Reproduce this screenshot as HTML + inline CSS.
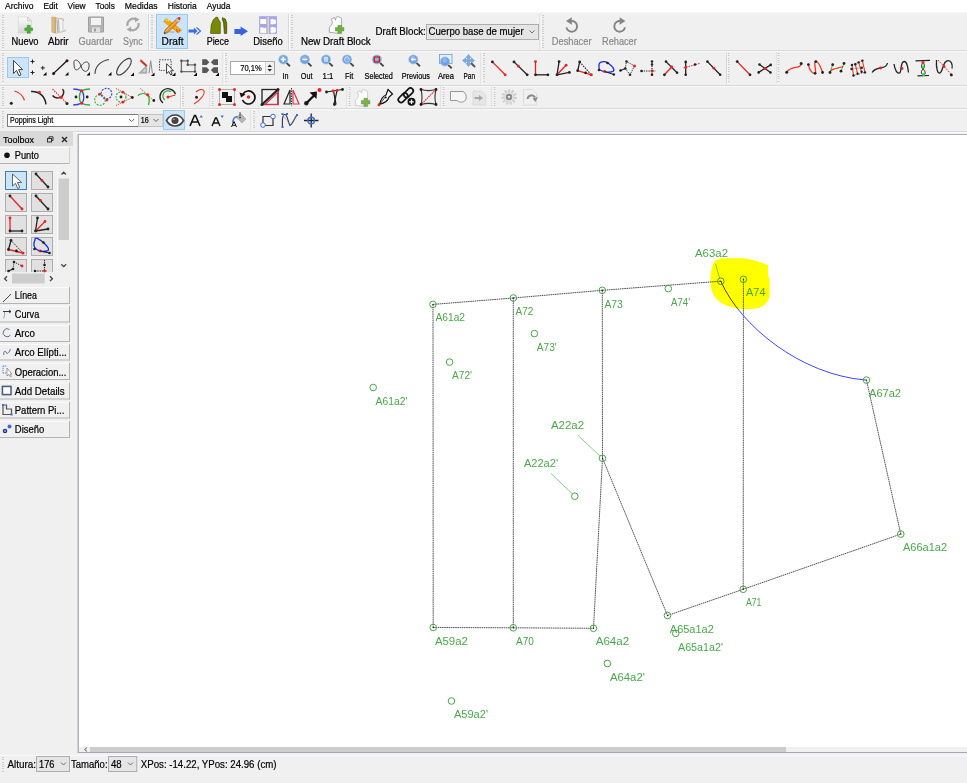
<!DOCTYPE html><html><head><meta charset="utf-8"><title>Seamly2D</title>
<style>html,body{margin:0;padding:0;background:#f0f0f0;overflow:hidden;}svg{display:block;}text{font-family:"Liberation Sans",sans-serif;}</style>
</head><body>
<svg width="967" height="783" viewBox="0 0 967 783">
<rect x="0" y="0" width="967" height="783" fill="#f0f0f0" />
<rect x="0" y="0" width="967" height="12" fill="#ffffff" />
<rect x="0" y="12" width="967" height="1" fill="#f6f6f6" />
<text x="5" y="9" font-size="9.5" fill="#000" stroke="#000" stroke-width="0.2" textLength="28.5" lengthAdjust="spacingAndGlyphs" >Archivo</text>
<text x="43.4" y="9" font-size="9.5" fill="#000" stroke="#000" stroke-width="0.2" textLength="14.3" lengthAdjust="spacingAndGlyphs" >Edit</text>
<text x="67.6" y="9" font-size="9.5" fill="#000" stroke="#000" stroke-width="0.2" textLength="18.0" lengthAdjust="spacingAndGlyphs" >View</text>
<text x="95.5" y="9" font-size="9.5" fill="#000" stroke="#000" stroke-width="0.2" textLength="19.3" lengthAdjust="spacingAndGlyphs" >Tools</text>
<text x="124.8" y="9" font-size="9.5" fill="#000" stroke="#000" stroke-width="0.2" textLength="32.9" lengthAdjust="spacingAndGlyphs" >Medidas</text>
<text x="167.8" y="9" font-size="9.5" fill="#000" stroke="#000" stroke-width="0.2" textLength="28.9" lengthAdjust="spacingAndGlyphs" >Historia</text>
<text x="206.8" y="9" font-size="9.5" fill="#000" stroke="#000" stroke-width="0.2" textLength="23.5" lengthAdjust="spacingAndGlyphs" >Ayuda</text>
<rect x="0" y="50" width="967" height="1" fill="#d9d9d9" />
<rect x="0" y="51" width="967" height="1" fill="#f9f9f9" />
<rect x="0" y="85" width="967" height="1" fill="#d9d9d9" />
<rect x="0" y="86" width="967" height="1" fill="#f9f9f9" />
<rect x="0" y="108" width="967" height="1" fill="#d9d9d9" />
<rect x="0" y="109" width="967" height="1" fill="#f9f9f9" />
<rect x="0" y="131" width="967" height="1" fill="#d9d9d9" />
<rect x="0" y="132" width="967" height="1" fill="#f9f9f9" />
<rect x="2.2" y="15" width="1.6" height="1" fill="#c4c4cc"/>
<rect x="2.2" y="17" width="1.6" height="1" fill="#c4c4cc"/>
<rect x="2.2" y="20" width="1.6" height="1" fill="#c4c4cc"/>
<rect x="2.2" y="22" width="1.6" height="1" fill="#c4c4cc"/>
<rect x="2.2" y="24" width="1.6" height="1" fill="#c4c4cc"/>
<rect x="2.2" y="27" width="1.6" height="1" fill="#c4c4cc"/>
<rect x="2.2" y="29" width="1.6" height="1" fill="#c4c4cc"/>
<rect x="2.2" y="31" width="1.6" height="1" fill="#c4c4cc"/>
<rect x="2.2" y="33" width="1.6" height="1" fill="#c4c4cc"/>
<rect x="2.2" y="36" width="1.6" height="1" fill="#c4c4cc"/>
<rect x="2.2" y="38" width="1.6" height="1" fill="#c4c4cc"/>
<rect x="2.2" y="40" width="1.6" height="1" fill="#c4c4cc"/>
<rect x="2.2" y="43" width="1.6" height="1" fill="#c4c4cc"/>
<rect x="2.2" y="45" width="1.6" height="1" fill="#c4c4cc"/>
<rect x="2.2" y="47" width="1.6" height="1" fill="#c4c4cc"/>
<defs><linearGradient id="docg" x1="0" y1="0" x2="0" y2="1"><stop offset="0" stop-color="#fcfcfc"/><stop offset="1" stop-color="#d4d4d4"/></linearGradient><linearGradient id="fldg" x1="0" y1="0" x2="1" y2="0"><stop offset="0" stop-color="#e6c48c"/><stop offset="1" stop-color="#d0a868"/></linearGradient></defs>
<path d="M18.3 17 H27.5 L31.5 21 V33 H18.3 Z" fill="url(#docg)" stroke="#d0d0d0" stroke-width="0.6"/><path d="M27.5 17 L27.5 21 L31.5 21 Z" fill="#e8e8e8" stroke="#b8b8b8" stroke-width="0.5"/><path d="M27.2 25.3 H30.2 V28 H32.6 V30.6 H30.2 V33.2 H27.2 V30.6 H24.8 V28 H27.2 Z" fill="#4cb030" stroke="#2f8a20" stroke-width="0.5"/>
<text x="11.6" y="44.5" font-size="10" fill="#000000" stroke="#000000" stroke-width="0.2" textLength="26.9" lengthAdjust="spacingAndGlyphs" >Nuevo</text>
<path d="M51.8 17 L56 17.5 L56 33.3 L51.8 32 Z" fill="url(#fldg)" stroke="#c09050" stroke-width="0.5"/><path d="M56 18 L63 19 L63 31 L56 33.3 Z" fill="#f2f2f2" stroke="#b0b0b0" stroke-width="0.5"/><path d="M57 19.5 L57.8 32.5 M58.5 19.5 L59 32" stroke="#9a9a9a" stroke-width="0.8"/><path d="M56 33.3 L63 31 L65.8 29 L65.8 31.5 L57 33.5 Z" fill="#c8c8c8"/><path d="M55 18.5 L63.5 19 L63.5 21" fill="none" stroke="#d8b478" stroke-width="0.8"/>
<text x="48" y="44.5" font-size="10" fill="#000000" stroke="#000000" stroke-width="0.2" textLength="20.6" lengthAdjust="spacingAndGlyphs" >Abrir</text>
<g transform="translate(88,16.5)"><path d="M0.5 0.5 H15.5 V15.5 H0.5 Z" fill="#b4b4b4" stroke="#a0a0a0" stroke-width="1"/><rect x="3" y="1.5" width="10" height="7" fill="#f2f2f2"/><rect x="4" y="11" width="8" height="4.5" fill="#e0e0e0"/><rect x="6" y="12" width="2" height="3" fill="#9a9a9a"/></g>
<text x="78.6" y="44.5" font-size="10" fill="#8a8a8a" stroke="#8a8a8a" stroke-width="0.2" textLength="34.1" lengthAdjust="spacingAndGlyphs" >Guardar</text>
<g transform="translate(133,24.5)" fill="none" stroke="#a8a8a8" stroke-width="2.2"><path d="M-5.5 1.5 A6 6 0 0 1 3.5 -4.8"/><path d="M5.5 -1.5 A6 6 0 0 1 -3.5 4.8"/></g><path d="M135 17 L139.5 19.5 L135 22.5 Z" fill="#a8a8a8"/><path d="M131 32 L126.5 29.5 L131 26.5 Z" fill="#a8a8a8"/>
<text x="123" y="44.5" font-size="10" fill="#8a8a8a" stroke="#8a8a8a" stroke-width="0.2" textLength="19.7" lengthAdjust="spacingAndGlyphs" >Sync</text>
<rect x="148" y="14" width="1" height="36" fill="#d8d8d8" />
<rect x="149" y="14" width="1" height="36" fill="#fbfbfb" />
<rect x="151.2" y="15" width="1.6" height="1" fill="#c4c4cc"/>
<rect x="151.2" y="17" width="1.6" height="1" fill="#c4c4cc"/>
<rect x="151.2" y="20" width="1.6" height="1" fill="#c4c4cc"/>
<rect x="151.2" y="22" width="1.6" height="1" fill="#c4c4cc"/>
<rect x="151.2" y="24" width="1.6" height="1" fill="#c4c4cc"/>
<rect x="151.2" y="27" width="1.6" height="1" fill="#c4c4cc"/>
<rect x="151.2" y="29" width="1.6" height="1" fill="#c4c4cc"/>
<rect x="151.2" y="31" width="1.6" height="1" fill="#c4c4cc"/>
<rect x="151.2" y="33" width="1.6" height="1" fill="#c4c4cc"/>
<rect x="151.2" y="36" width="1.6" height="1" fill="#c4c4cc"/>
<rect x="151.2" y="38" width="1.6" height="1" fill="#c4c4cc"/>
<rect x="151.2" y="40" width="1.6" height="1" fill="#c4c4cc"/>
<rect x="151.2" y="43" width="1.6" height="1" fill="#c4c4cc"/>
<rect x="151.2" y="45" width="1.6" height="1" fill="#c4c4cc"/>
<rect x="151.2" y="47" width="1.6" height="1" fill="#c4c4cc"/>
<rect x="156.5" y="14.5" width="31" height="34" fill="#cce4f7" stroke="#99c9ef" stroke-width="1" />
<path d="M163.5 21.5 L166.5 18.5 L181.5 30 L178.5 33 Z" fill="#f8a800" stroke="#d88000" stroke-width="0.5"/><circle cx="166.7" cy="20.3" r="0.7" fill="#ffff40"/><circle cx="168.5" cy="20.6" r="0.7" fill="#ffff40"/><circle cx="176.6" cy="29.9" r="0.7" fill="#e02020"/><circle cx="177.3" cy="31.7" r="0.7" fill="#e02020"/><circle cx="179.5" cy="30.6" r="0.7" fill="#e02020"/><ellipse cx="172" cy="32" rx="3" ry="1" fill="#98a8c0" opacity="0.6"/><path d="M164 33.8 L165 30 L177 18.5 L179.5 21 L167.8 32.8 Z" fill="#e89020" stroke="#8a5010" stroke-width="0.5"/><path d="M165.5 31.5 L177.8 19.8" stroke="#ffd070" stroke-width="0.8"/><path d="M164 33.8 L164.6 31.8 L166 33.2 Z" fill="#333"/><path d="M176.5 19 L178.3 17.2 C 179.5 16.3, 181.2 17.6, 180.5 19 L178.8 20.8 Z" fill="#d83030"/><path d="M176 19.5 L177.2 18.3 L179.9 21 L178.7 22.2 Z" fill="#c8c8c8"/>
<text x="161.6" y="44.5" font-size="10" fill="#000000" stroke="#000000" stroke-width="0.2" textLength="21.9" lengthAdjust="spacingAndGlyphs" >Draft</text>
<path d="M188.5 29.5 H194 V27.5 L197.5 31 L194 34.5 V32.5 H188.5 Z" fill="#3a6fe0"/><path d="M196.5 27.5 L200.5 31 L196.5 34.5" fill="none" stroke="#3a6fe0" stroke-width="1.2"/>
<path d="M210.6 33.4 L211.2 25 L213.3 19.8 L215.8 17.3 L217.8 17.3 L218.2 19 L220.3 22.3 L220.3 33.4 Z" fill="#7a8a00" stroke="#4a5200" stroke-width="0.7"/><path d="M222.4 17.7 L225.3 19 L226.7 23.1 L226.7 33.4 L224.4 33.4 L223.6 23.1 L222.4 19.5 Z" fill="#6a7a00" stroke="#3a4200" stroke-width="0.7"/>
<text x="206.7" y="44.5" font-size="10" fill="#000000" stroke="#000000" stroke-width="0.2" textLength="22.3" lengthAdjust="spacingAndGlyphs" >Piece</text>
<path d="M234.4 28.9 H240.6 V26.4 L248 31.2 L240.6 35.9 V33.9 H234.4 Z" fill="#3a62e0"/>
<g><rect x="259.2" y="16.2" width="17.8" height="17.6" fill="#a6a2f8"/><rect x="260" y="18.8" width="6.6" height="5.4" fill="#fbfbfb" stroke="#9a9a9a" stroke-width="0.4"/><path d="M260 27 H263 L264 28 L266.6 27 V33.4 H260 Z" fill="#fbfbfb" stroke="#9a9a9a" stroke-width="0.4"/><path d="M269.8 19.5 L272 18.8 L276.2 19.5 V24 L272 24.8 L269.8 24 L270.5 21.7 Z" fill="#fbfbfb" stroke="#9a9a9a" stroke-width="0.4"/><path d="M269.8 28 L272 26.5 L276.2 27.5 V32.5 L272 33.4 L269.8 32.5 L270.5 30 Z" fill="#fbfbfb" stroke="#9a9a9a" stroke-width="0.4"/><rect x="267.2" y="16.2" width="1.9" height="17.6" fill="#d8d8d8" stroke="#a8a8a8" stroke-width="0.3"/></g>
<text x="253.3" y="44.5" font-size="10" fill="#000000" stroke="#000000" stroke-width="0.2" textLength="29.4" lengthAdjust="spacingAndGlyphs" >Diseño</text>
<rect x="288" y="14" width="1" height="36" fill="#d8d8d8" />
<rect x="289" y="14" width="1" height="36" fill="#fbfbfb" />
<rect x="291.2" y="15" width="1.6" height="1" fill="#c4c4cc"/>
<rect x="291.2" y="17" width="1.6" height="1" fill="#c4c4cc"/>
<rect x="291.2" y="20" width="1.6" height="1" fill="#c4c4cc"/>
<rect x="291.2" y="22" width="1.6" height="1" fill="#c4c4cc"/>
<rect x="291.2" y="24" width="1.6" height="1" fill="#c4c4cc"/>
<rect x="291.2" y="27" width="1.6" height="1" fill="#c4c4cc"/>
<rect x="291.2" y="29" width="1.6" height="1" fill="#c4c4cc"/>
<rect x="291.2" y="31" width="1.6" height="1" fill="#c4c4cc"/>
<rect x="291.2" y="33" width="1.6" height="1" fill="#c4c4cc"/>
<rect x="291.2" y="36" width="1.6" height="1" fill="#c4c4cc"/>
<rect x="291.2" y="38" width="1.6" height="1" fill="#c4c4cc"/>
<rect x="291.2" y="40" width="1.6" height="1" fill="#c4c4cc"/>
<rect x="291.2" y="43" width="1.6" height="1" fill="#c4c4cc"/>
<rect x="291.2" y="45" width="1.6" height="1" fill="#c4c4cc"/>
<rect x="291.2" y="47" width="1.6" height="1" fill="#c4c4cc"/>
<path d="M331.2 19.3 L334.3 17.4 L335.5 20.2 L336.1 17.4 L337.7 16.5 L341.6 18.3 L341.6 26 L338 33.3 L329.3 32.3 L329.3 27.4 L331.8 24.6 L332.4 21.8 Z" fill="#ffffff" stroke="#8a8a8a" stroke-width="0.7" stroke-linejoin="round"/><path d="M337.9 25.3 H341.6 V27.4 H343.9 V31 H341.6 V33.6 H337.9 V31 H335.3 V27.4 H337.9 Z" fill="#6cb040" stroke="#4a8a2a" stroke-width="0.4"/>
<text x="300.9" y="44.5" font-size="10" fill="#000000" stroke="#000000" stroke-width="0.2" textLength="69.8" lengthAdjust="spacingAndGlyphs" >New Draft Block</text>
<text x="375.6" y="35.2" font-size="10" fill="#000000" stroke="#000000" stroke-width="0.2" textLength="50.2" lengthAdjust="spacingAndGlyphs" >Draft Block:</text>
<rect x="426.5" y="24.5" width="112" height="15" fill="#e5e5e5" stroke="#adadad" stroke-width="1" />
<text x="428.6" y="35.2" font-size="10" fill="#000000" stroke="#000000" stroke-width="0.2" textLength="95" lengthAdjust="spacingAndGlyphs" >Cuerpo base de mujer</text>
<path d="M529.5 30.5 L532 33 L534.5 30.5" fill="none" stroke="#555" stroke-width="0.8"/>
<rect x="539.5" y="14" width="1" height="36" fill="#d8d8d8" />
<rect x="540.5" y="14" width="1" height="36" fill="#fbfbfb" />
<rect x="542.2" y="15" width="1.6" height="1" fill="#c4c4cc"/>
<rect x="542.2" y="17" width="1.6" height="1" fill="#c4c4cc"/>
<rect x="542.2" y="20" width="1.6" height="1" fill="#c4c4cc"/>
<rect x="542.2" y="22" width="1.6" height="1" fill="#c4c4cc"/>
<rect x="542.2" y="24" width="1.6" height="1" fill="#c4c4cc"/>
<rect x="542.2" y="27" width="1.6" height="1" fill="#c4c4cc"/>
<rect x="542.2" y="29" width="1.6" height="1" fill="#c4c4cc"/>
<rect x="542.2" y="31" width="1.6" height="1" fill="#c4c4cc"/>
<rect x="542.2" y="33" width="1.6" height="1" fill="#c4c4cc"/>
<rect x="542.2" y="36" width="1.6" height="1" fill="#c4c4cc"/>
<rect x="542.2" y="38" width="1.6" height="1" fill="#c4c4cc"/>
<rect x="542.2" y="40" width="1.6" height="1" fill="#c4c4cc"/>
<rect x="542.2" y="43" width="1.6" height="1" fill="#c4c4cc"/>
<rect x="542.2" y="45" width="1.6" height="1" fill="#c4c4cc"/>
<rect x="542.2" y="47" width="1.6" height="1" fill="#c4c4cc"/>
<g fill="none" stroke="#858585" stroke-width="1.9"><path d="M571 21 A5.4 5.4 0 1 1 566.4 27.4"/><path d="M620.4 21 A5.4 5.4 0 1 0 625 27.4"/></g><path d="M566 21 L571.8 17.2 L571.8 24.8 Z" fill="#858585"/><path d="M625.4 21 L619.6 17.2 L619.6 24.8 Z" fill="#858585"/>
<text x="551.8" y="44.5" font-size="10" fill="#8a8a8a" stroke="#8a8a8a" stroke-width="0.2" textLength="39.7" lengthAdjust="spacingAndGlyphs" >Deshacer</text>
<text x="602" y="44.5" font-size="10" fill="#8a8a8a" stroke="#8a8a8a" stroke-width="0.2" textLength="34.8" lengthAdjust="spacingAndGlyphs" >Rehacer</text>
<rect x="2.2" y="53" width="1.6" height="1" fill="#c4c4cc"/>
<rect x="2.2" y="55" width="1.6" height="1" fill="#c4c4cc"/>
<rect x="2.2" y="58" width="1.6" height="1" fill="#c4c4cc"/>
<rect x="2.2" y="60" width="1.6" height="1" fill="#c4c4cc"/>
<rect x="2.2" y="62" width="1.6" height="1" fill="#c4c4cc"/>
<rect x="2.2" y="64" width="1.6" height="1" fill="#c4c4cc"/>
<rect x="2.2" y="67" width="1.6" height="1" fill="#c4c4cc"/>
<rect x="2.2" y="69" width="1.6" height="1" fill="#c4c4cc"/>
<rect x="2.2" y="71" width="1.6" height="1" fill="#c4c4cc"/>
<rect x="2.2" y="74" width="1.6" height="1" fill="#c4c4cc"/>
<rect x="2.2" y="76" width="1.6" height="1" fill="#c4c4cc"/>
<rect x="2.2" y="78" width="1.6" height="1" fill="#c4c4cc"/>
<rect x="2.2" y="81" width="1.6" height="1" fill="#c4c4cc"/>
<rect x="7.5" y="57.5" width="21" height="20" fill="#cce4f7" stroke="#99c9ef" stroke-width="1" />
<path d="M13.5 60.5 L13.5 73.5 L16.5 70.5 L19 75.8 L21 74.8 L18.6 69.6 L22.6 69.6 Z" fill="#fff" stroke="#333" stroke-width="0.9" stroke-linejoin="round"/>
<g stroke="#222" stroke-width="1"><path d="M30.5 61.5 H34.5 M32.5 59.5 V63.5"/><path d="M40.8 67.9 H44.8 M42.8 65.9 V69.9"/><path d="M30.5 72.5 H34.5 M32.5 70.5 V74.5"/></g>
<path d="M46.5 75.5 L43.0 75.5 L46.5 72.0 Z" fill="#000"/>
<line x1="53.6" y1="73.4" x2="67" y2="60.7" stroke="#111" stroke-width="1.3"/>
<circle cx="53.6" cy="73.4" r="1.5" fill="#3a1010"/>
<circle cx="67" cy="60.7" r="1.5" fill="#3a1010"/>
<path d="M68.5 75.5 L65.0 75.5 L68.5 72.0 Z" fill="#000"/>
<path d="M74 64 C 73 58, 79 59, 81 66 C 83 73, 88 73, 89 67 C 90 61, 85 60, 81 66 C 78 71, 74 72, 74 64 Z" fill="none" stroke="#444" stroke-width="1"/>
<path d="M90 75.5 L86.5 75.5 L90 72.0 Z" fill="#000"/>
<path d="M95 74 C 95 67, 100 61, 109 59.5" fill="none" stroke="#444" stroke-width="1.1"/>
<path d="M111.5 75.5 L108.0 75.5 L111.5 72.0 Z" fill="#000"/>
<ellipse cx="124" cy="66.7" rx="10.2" ry="4.3" transform="rotate(-50 124 66.7)" fill="none" stroke="#3a3a3a" stroke-width="1.1"/>
<path d="M134 76 L130.5 76 L134 72.5 Z" fill="#000"/>
<path d="M138.7 73.3 L146.7 73.3 L146.7 65.4 Z" fill="#b0b0b0" stroke="#9a9a9a" stroke-width="0.6"/><path d="M142.5 71.5 L145.3 71.5 L145.3 68.7 Z" fill="#e0e0e0"/><path d="M140.4 60.3 L146.7 66" stroke="#d03030" stroke-width="2.2"/><path d="M140 60 L141.2 59" stroke="#f0c060" stroke-width="1"/><path d="M150.7 60.8 L149 73.3 M150.7 60.8 L152.4 73.3" stroke="#8a8a8a" stroke-width="1" fill="none"/>
<path d="M154.5 76 L151.0 76 L154.5 72.5 Z" fill="#000"/>
<rect x="159.5" y="59.8" width="11.6" height="10.6" fill="none" stroke="#222" stroke-width="0.9" stroke-dasharray="1.3,1.3"/><path d="M166.6 63.7 L166.6 73.6 L168.9 71.5 L170.6 75 L172.2 74.2 L170.6 70.9 L173.4 70.7 Z" fill="#fff" stroke="#222" stroke-width="0.9" stroke-linejoin="round"/>
<path d="M175.5 76 L172.0 76 L175.5 72.5 Z" fill="#000"/>
<path d="M181.4 60.8 L187.7 60.8 L187.7 64.8 L195 64.8 L195 71.6 L181.4 71.6 Z" fill="none" stroke="#707070" stroke-width="1.3"/>
<circle cx="181.4" cy="60.8" r="1.2" fill="#505050"/>
<circle cx="187.7" cy="60.8" r="1.2" fill="#505050"/>
<circle cx="187.7" cy="64.8" r="1.2" fill="#505050"/>
<circle cx="195" cy="64.8" r="1.2" fill="#505050"/>
<circle cx="195" cy="71.6" r="1.2" fill="#505050"/>
<circle cx="181.4" cy="71.6" r="1.2" fill="#505050"/>
<path d="M197 76 L193.5 76 L197 72.5 Z" fill="#000"/>
<g fill="#575757"><path d="M202.2 59.3 H206.6 L209.3 62.2 L206.6 65.1 H202.2 Z"/><path d="M218 59.3 H213.6 L210.9 62.2 L213.6 65.1 H218 Z"/><path d="M202.2 67.2 H206.6 L209.3 70.1 L206.6 73 H202.2 Z"/><path d="M218 67.2 H213.6 L210.9 70.1 L213.6 73 H218 Z"/></g>
<path d="M219 76 L215.5 76 L219 72.5 Z" fill="#000"/>
<rect x="222.5" y="52" width="1" height="32" fill="#d8d8d8" />
<rect x="223.5" y="52" width="1" height="32" fill="#fbfbfb" />
<rect x="225.2" y="53" width="1.6" height="1" fill="#c4c4cc"/>
<rect x="225.2" y="55" width="1.6" height="1" fill="#c4c4cc"/>
<rect x="225.2" y="58" width="1.6" height="1" fill="#c4c4cc"/>
<rect x="225.2" y="60" width="1.6" height="1" fill="#c4c4cc"/>
<rect x="225.2" y="62" width="1.6" height="1" fill="#c4c4cc"/>
<rect x="225.2" y="64" width="1.6" height="1" fill="#c4c4cc"/>
<rect x="225.2" y="67" width="1.6" height="1" fill="#c4c4cc"/>
<rect x="225.2" y="69" width="1.6" height="1" fill="#c4c4cc"/>
<rect x="225.2" y="71" width="1.6" height="1" fill="#c4c4cc"/>
<rect x="225.2" y="74" width="1.6" height="1" fill="#c4c4cc"/>
<rect x="225.2" y="76" width="1.6" height="1" fill="#c4c4cc"/>
<rect x="225.2" y="78" width="1.6" height="1" fill="#c4c4cc"/>
<rect x="225.2" y="81" width="1.6" height="1" fill="#c4c4cc"/>
<rect x="230.5" y="61.5" width="44" height="13" fill="#ffffff" stroke="#a8a8a8" stroke-width="1" />
<rect x="265.5" y="62" width="8.5" height="12" fill="#f0f0f0" />
<rect x="265" y="62" width="1" height="12" fill="#d0d0d0" />
<path d="M267.5 67 L269.7 64.5 L271.9 67 Z M267.5 69 L269.7 71.5 L271.9 69 Z" fill="#222"/>
<text x="240.2" y="71.3" font-size="9" fill="#000000" stroke="#000000" stroke-width="0.2" textLength="21.5" lengthAdjust="spacingAndGlyphs" >70,1%</text>
<g transform="translate(278.8,54.5)"><line x1="7.6" y1="8.4" x2="11.2" y2="11.8" stroke="#4a4a4a" stroke-width="1.9"/><circle cx="4.5" cy="5" r="4.6" fill="#6aa2e8" stroke="#b8c0c8" stroke-width="0.7"/><circle cx="4.2" cy="3.8" r="2.4" fill="#9cc4f0" opacity="0.7"/><g transform="translate(-1,-0.5)"><path d="M3 5.5 H8 M5.5 3 V8" stroke="#fff" stroke-width="1.4"/></g></g>
<text x="282.6" y="79.2" font-size="8.5" fill="#000000" stroke="#000000" stroke-width="0.2" textLength="6.0" lengthAdjust="spacingAndGlyphs" >In</text>
<g transform="translate(300.3,54.5)"><line x1="7.6" y1="8.4" x2="11.2" y2="11.8" stroke="#4a4a4a" stroke-width="1.9"/><circle cx="4.5" cy="5" r="4.6" fill="#6aa2e8" stroke="#b8c0c8" stroke-width="0.7"/><circle cx="4.2" cy="3.8" r="2.4" fill="#9cc4f0" opacity="0.7"/><g transform="translate(-1,-0.5)"><path d="M3 5.5 H8" stroke="#fff" stroke-width="1.4"/></g></g>
<text x="300.8" y="79.2" font-size="8.5" fill="#000000" stroke="#000000" stroke-width="0.2" textLength="11.6" lengthAdjust="spacingAndGlyphs" >Out</text>
<g transform="translate(321.5,54.5)"><line x1="7.6" y1="8.4" x2="11.2" y2="11.8" stroke="#4a4a4a" stroke-width="1.9"/><circle cx="4.5" cy="5" r="4.6" fill="#6aa2e8" stroke="#b8c0c8" stroke-width="0.7"/><circle cx="4.2" cy="3.8" r="2.4" fill="#9cc4f0" opacity="0.7"/><g transform="translate(-1,-0.5)"><path d="M4.5 3 V8 M6.5 3 V8" stroke="#fff" stroke-width="1"/></g></g>
<text x="322.6" y="79.2" font-size="8.5" fill="#000000" stroke="#000000" stroke-width="0.2" textLength="10.8" lengthAdjust="spacingAndGlyphs" >1:1</text>
<g transform="translate(342.5,54.5)"><line x1="7.6" y1="8.4" x2="11.2" y2="11.8" stroke="#4a4a4a" stroke-width="1.9"/><circle cx="4.5" cy="5" r="4.6" fill="#6aa2e8" stroke="#b8c0c8" stroke-width="0.7"/><circle cx="4.2" cy="3.8" r="2.4" fill="#9cc4f0" opacity="0.7"/><g transform="translate(-1,-0.5)"><circle cx="5.5" cy="5.5" r="2.5" fill="none" stroke="#fff" stroke-width="0.9" stroke-dasharray="1.2,1"/></g></g>
<text x="345" y="79.2" font-size="8.5" fill="#000000" stroke="#000000" stroke-width="0.2" textLength="8.3" lengthAdjust="spacingAndGlyphs" >Fit</text>
<g transform="translate(372.4,54.5)"><line x1="7.6" y1="8.4" x2="11.2" y2="11.8" stroke="#4a4a4a" stroke-width="1.9"/><circle cx="4.5" cy="5" r="4.6" fill="#6aa2e8" stroke="#b8c0c8" stroke-width="0.7"/><circle cx="4.2" cy="3.8" r="2.4" fill="#9cc4f0" opacity="0.7"/><g transform="translate(-1,-0.5)"><rect x="3" y="3" width="5" height="5" fill="none" stroke="#d02020" stroke-width="1.3"/></g></g>
<text x="364.6" y="79.2" font-size="8.5" fill="#000000" stroke="#000000" stroke-width="0.2" textLength="28.2" lengthAdjust="spacingAndGlyphs" >Selected</text>
<g transform="translate(408.8,54.5)"><line x1="7.6" y1="8.4" x2="11.2" y2="11.8" stroke="#4a4a4a" stroke-width="1.9"/><circle cx="4.5" cy="5" r="4.6" fill="#6aa2e8" stroke="#b8c0c8" stroke-width="0.7"/><circle cx="4.2" cy="3.8" r="2.4" fill="#9cc4f0" opacity="0.7"/><g transform="translate(-1,-0.5)"><path d="M3 5.5 L5 3.5 V4.7 H8 V6.3 H5 V7.5 Z" fill="#fff"/></g></g>
<text x="401.7" y="79.2" font-size="8.5" fill="#000000" stroke="#000000" stroke-width="0.2" textLength="28.2" lengthAdjust="spacingAndGlyphs" >Previous</text>
<rect x="439.5" y="54.5" width="12.5" height="9" fill="#e8f0fa" stroke="#6a9ad8" stroke-width="0.8"/>
<g transform="translate(440.5,56.5)"><line x1="7.6" y1="8.4" x2="11.2" y2="11.8" stroke="#4a4a4a" stroke-width="1.9"/><circle cx="4.5" cy="5" r="4.6" fill="#6aa2e8" stroke="#b8c0c8" stroke-width="0.7"/><circle cx="4.2" cy="3.8" r="2.4" fill="#9cc4f0" opacity="0.7"/><g transform="translate(-1,-0.5)"></g></g>
<text x="438" y="79.2" font-size="8.5" fill="#000000" stroke="#000000" stroke-width="0.2" textLength="16" lengthAdjust="spacingAndGlyphs" >Area</text>
<g transform="translate(462.5,54.5)"><line x1="8.5" y1="8.5" x2="12.5" y2="12.5" stroke="#555" stroke-width="2"/><path d="M6 0 L8.5 3 L7 3 L7 5 L9 5 L9 3.5 L12 6 L9 8.5 L9 7 L7 7 L7 9 L8.5 9 L6 12 L3.5 9 L5 9 L5 7 L3 7 L3 8.5 L0 6 L3 3.5 L3 5 L5 5 L5 3 L3.5 3 Z" fill="#7aaee8" stroke="#5a8ac8" stroke-width="0.5"/></g>
<text x="463.5" y="79.2" font-size="8.5" fill="#000000" stroke="#000000" stroke-width="0.2" textLength="11.5" lengthAdjust="spacingAndGlyphs" >Pan</text>
<rect x="480.5" y="52" width="1" height="32" fill="#d8d8d8" />
<rect x="481.5" y="52" width="1" height="32" fill="#fbfbfb" />
<rect x="483.2" y="53" width="1.6" height="1" fill="#c4c4cc"/>
<rect x="483.2" y="55" width="1.6" height="1" fill="#c4c4cc"/>
<rect x="483.2" y="58" width="1.6" height="1" fill="#c4c4cc"/>
<rect x="483.2" y="60" width="1.6" height="1" fill="#c4c4cc"/>
<rect x="483.2" y="62" width="1.6" height="1" fill="#c4c4cc"/>
<rect x="483.2" y="64" width="1.6" height="1" fill="#c4c4cc"/>
<rect x="483.2" y="67" width="1.6" height="1" fill="#c4c4cc"/>
<rect x="483.2" y="69" width="1.6" height="1" fill="#c4c4cc"/>
<rect x="483.2" y="71" width="1.6" height="1" fill="#c4c4cc"/>
<rect x="483.2" y="74" width="1.6" height="1" fill="#c4c4cc"/>
<rect x="483.2" y="76" width="1.6" height="1" fill="#c4c4cc"/>
<rect x="483.2" y="78" width="1.6" height="1" fill="#c4c4cc"/>
<rect x="483.2" y="81" width="1.6" height="1" fill="#c4c4cc"/>
<line x1="492.4" y1="61.9" x2="505.2" y2="74.8" stroke="#f02020" stroke-width="1.3"/>
<circle cx="492.4" cy="61.9" r="1.4" fill="#222"/>
<circle cx="505.2" cy="74.8" r="1.4" fill="#f02020"/>
<line x1="514" y1="61.9" x2="527.2" y2="74.8" stroke="#222" stroke-width="1.3"/>
<circle cx="514" cy="61.9" r="1.4" fill="#222"/>
<circle cx="527.2" cy="74.8" r="1.4" fill="#222"/>
<circle cx="518.4" cy="66.2" r="1.4" fill="#f02020"/>
<line x1="535.5" y1="61.6" x2="535.5" y2="74.8" stroke="#f02020" stroke-width="1.3"/>
<line x1="535.5" y1="74.8" x2="547.9" y2="74.8" stroke="#222" stroke-width="1.3"/>
<circle cx="535.5" cy="61.6" r="1.4" fill="#f02020"/>
<circle cx="535.5" cy="74.8" r="1.4" fill="#222"/>
<circle cx="547.9" cy="74.8" r="1.4" fill="#222"/>
<line x1="557" y1="74.8" x2="559.1" y2="61.6" stroke="#222" stroke-width="1.3"/>
<line x1="557" y1="74.8" x2="569.4" y2="72.4" stroke="#222" stroke-width="1.3"/>
<line x1="557" y1="74.8" x2="566.1" y2="65.2" stroke="#f02020" stroke-width="1.3"/>
<circle cx="557" cy="74.8" r="1.4" fill="#222"/>
<circle cx="559.1" cy="61.6" r="1.4" fill="#222"/>
<circle cx="569.4" cy="72.4" r="1.4" fill="#222"/>
<circle cx="566.1" cy="65.2" r="1.4" fill="#f02020"/>
<line x1="579.7" y1="61.9" x2="577.7" y2="70.7" stroke="#222" stroke-width="1.3"/>
<line x1="579.7" y1="61.9" x2="591.3" y2="74.8" stroke="#222" stroke-width="1.1" stroke-dasharray="1.5,1.1"/>
<line x1="577.7" y1="70.7" x2="591.3" y2="74.8" stroke="#f02020" stroke-width="1.3"/>
<circle cx="579.7" cy="61.9" r="1.4" fill="#222"/>
<circle cx="577.7" cy="70.7" r="1.4" fill="#222"/>
<circle cx="585.6" cy="72.8" r="1.4" fill="#222"/>
<circle cx="591.3" cy="74.8" r="1.5" fill="#f02020"/>
<path d="M599 66 C 598 61, 605 61, 608 63 C 612 66, 615 69, 613.5 71 C 611 73, 604 72.5, 600 70 C 598.5 69, 599 67, 599 66 Z" fill="none" stroke="#1a2ae0" stroke-width="1.3"/>
<circle cx="607.5" cy="63" r="1.3" fill="#222"/>
<circle cx="599" cy="70" r="1.3" fill="#222"/>
<circle cx="604.5" cy="71.5" r="1.4" fill="#f02020"/>
<circle cx="613.8" cy="74.5" r="1.3" fill="#222"/>
<line x1="604.5" y1="71.5" x2="613.8" y2="74.5" stroke="#222" stroke-width="1"/>
<line x1="620.5" y1="70.5" x2="625.3" y2="68.5" stroke="#222" stroke-width="1.2"/>
<line x1="625.3" y1="68.5" x2="626.5" y2="61.5" stroke="#222" stroke-width="0.9" stroke-dasharray="1.2,1"/>
<line x1="626.5" y1="61.5" x2="634.5" y2="65.9" stroke="#222" stroke-width="0.9" stroke-dasharray="1.2,1"/>
<line x1="634.5" y1="65.9" x2="630" y2="74.8" stroke="#222" stroke-width="0.9" stroke-dasharray="1.2,1"/>
<line x1="625.3" y1="68.5" x2="630" y2="74.8" stroke="#222" stroke-width="0.9" stroke-dasharray="1.2,1"/>
<circle cx="620.5" cy="70.5" r="1.3" fill="#222"/>
<circle cx="625.3" cy="68.5" r="1.3" fill="#222"/>
<circle cx="626.5" cy="61.5" r="1.3" fill="#222"/>
<circle cx="630" cy="74.8" r="1.3" fill="#222"/>
<circle cx="634.5" cy="65.9" r="1.5" fill="#f02020"/>
<line x1="641.5" y1="71" x2="655.6" y2="71" stroke="#222" stroke-width="1.1" stroke-dasharray="1.3,1"/>
<line x1="652" y1="61" x2="652" y2="74.8" stroke="#222" stroke-width="1.1" stroke-dasharray="1.3,1"/>
<circle cx="641.5" cy="71" r="1.3" fill="#222"/>
<circle cx="652" cy="61.5" r="1.3" fill="#222"/>
<circle cx="652" cy="74.8" r="1.3" fill="#222"/>
<circle cx="652" cy="64.5" r="1.2" fill="#222"/>
<circle cx="652" cy="71" r="1.4" fill="#f02020"/>
<line x1="666" y1="61.6" x2="677.1" y2="72.7" stroke="#222" stroke-width="1.3"/>
<line x1="671.7" y1="67" x2="664.4" y2="74.8" stroke="#f02020" stroke-width="1.3"/>
<circle cx="666" cy="61.6" r="1.3" fill="#222"/>
<circle cx="677.1" cy="72.7" r="1.3" fill="#222"/>
<circle cx="664.4" cy="74.8" r="1.4" fill="#222"/>
<circle cx="671.7" cy="67" r="1.4" fill="#f02020"/>
<line x1="685.7" y1="61.9" x2="685.7" y2="74.8" stroke="#222" stroke-width="1.3"/>
<line x1="683.7" y1="67.9" x2="700.3" y2="63.2" stroke="#f02020" stroke-width="1" stroke-dasharray="1.5,1"/>
<circle cx="685.7" cy="61.9" r="1.3" fill="#222"/>
<circle cx="685.7" cy="74.8" r="1.3" fill="#222"/>
<circle cx="695" cy="64.5" r="1.3" fill="#222"/>
<circle cx="685.7" cy="67.5" r="1.4" fill="#f02020"/>
<line x1="707.4" y1="61.6" x2="720.2" y2="74.8" stroke="#222" stroke-width="1.3"/>
<circle cx="707.4" cy="61.6" r="1.3" fill="#222"/>
<circle cx="720.2" cy="74.8" r="1.3" fill="#222"/>
<circle cx="713.8" cy="68.2" r="1.4" fill="#f02020"/>
<rect x="726" y="52" width="1" height="32" fill="#d8d8d8" />
<rect x="727" y="52" width="1" height="32" fill="#fbfbfb" />
<rect x="727.7" y="53" width="1.6" height="1" fill="#c4c4cc"/>
<rect x="727.7" y="55" width="1.6" height="1" fill="#c4c4cc"/>
<rect x="727.7" y="58" width="1.6" height="1" fill="#c4c4cc"/>
<rect x="727.7" y="60" width="1.6" height="1" fill="#c4c4cc"/>
<rect x="727.7" y="62" width="1.6" height="1" fill="#c4c4cc"/>
<rect x="727.7" y="64" width="1.6" height="1" fill="#c4c4cc"/>
<rect x="727.7" y="67" width="1.6" height="1" fill="#c4c4cc"/>
<rect x="727.7" y="69" width="1.6" height="1" fill="#c4c4cc"/>
<rect x="727.7" y="71" width="1.6" height="1" fill="#c4c4cc"/>
<rect x="727.7" y="74" width="1.6" height="1" fill="#c4c4cc"/>
<rect x="727.7" y="76" width="1.6" height="1" fill="#c4c4cc"/>
<rect x="727.7" y="78" width="1.6" height="1" fill="#c4c4cc"/>
<rect x="727.7" y="81" width="1.6" height="1" fill="#c4c4cc"/>
<line x1="737.2" y1="61.6" x2="750" y2="74.8" stroke="#f02020" stroke-width="1.3"/>
<circle cx="737.2" cy="61.6" r="1.4" fill="#222"/>
<circle cx="750" cy="74.8" r="1.4" fill="#222"/>
<line x1="758.7" y1="72.4" x2="770.7" y2="64.9" stroke="#222" stroke-width="1.3"/>
<line x1="759.5" y1="64.5" x2="770.5" y2="72.5" stroke="#222" stroke-width="1.3"/>
<circle cx="758.7" cy="72.4" r="1.3" fill="#222"/>
<circle cx="770.7" cy="64.9" r="1.3" fill="#222"/>
<circle cx="759.5" cy="64.5" r="1.3" fill="#222"/>
<circle cx="770.5" cy="72.5" r="1.3" fill="#222"/>
<circle cx="765" cy="68.5" r="1.5" fill="#f02020"/>
<rect x="776.5" y="52" width="1" height="32" fill="#d8d8d8" />
<rect x="777.5" y="52" width="1" height="32" fill="#fbfbfb" />
<rect x="777.7" y="53" width="1.6" height="1" fill="#c4c4cc"/>
<rect x="777.7" y="55" width="1.6" height="1" fill="#c4c4cc"/>
<rect x="777.7" y="58" width="1.6" height="1" fill="#c4c4cc"/>
<rect x="777.7" y="60" width="1.6" height="1" fill="#c4c4cc"/>
<rect x="777.7" y="62" width="1.6" height="1" fill="#c4c4cc"/>
<rect x="777.7" y="64" width="1.6" height="1" fill="#c4c4cc"/>
<rect x="777.7" y="67" width="1.6" height="1" fill="#c4c4cc"/>
<rect x="777.7" y="69" width="1.6" height="1" fill="#c4c4cc"/>
<rect x="777.7" y="71" width="1.6" height="1" fill="#c4c4cc"/>
<rect x="777.7" y="74" width="1.6" height="1" fill="#c4c4cc"/>
<rect x="777.7" y="76" width="1.6" height="1" fill="#c4c4cc"/>
<rect x="777.7" y="78" width="1.6" height="1" fill="#c4c4cc"/>
<rect x="777.7" y="81" width="1.6" height="1" fill="#c4c4cc"/>
<path d="M786.7 72.3 C 789 68, 795 67.5, 798 67 C 800 66.5, 801 65, 801.2 63.5" fill="none" stroke="#f03a20" stroke-width="1.3"/>
<circle cx="786.7" cy="72.3" r="1.5" fill="#222"/>
<circle cx="801.2" cy="63.5" r="1.5" fill="#222"/>
<path d="M808.4 64.6 C 809.5 70, 812 74, 815.1 73.3 C 817 72, 813 62, 815.8 61.6 C 819 61, 821 68, 822.6 72.5" fill="none" stroke="#f03a20" stroke-width="1.3"/>
<circle cx="808.4" cy="64.6" r="1.4" fill="#222"/>
<circle cx="815.8" cy="61.6" r="1.4" fill="#222"/>
<circle cx="815.1" cy="73.3" r="1.4" fill="#222"/>
<circle cx="822.6" cy="72.5" r="1.4" fill="#222"/>
<line x1="830" y1="72.5" x2="832.7" y2="64.7" stroke="#40b040" stroke-width="1"/>
<line x1="841" y1="71.2" x2="844" y2="63.4" stroke="#40b040" stroke-width="1"/>
<path d="M830.5 71 C 833 68, 839 68.5, 843 66.5" fill="none" stroke="#f03a20" stroke-width="1.3"/>
<circle cx="830" cy="72.5" r="1.4" fill="#222"/>
<circle cx="832.7" cy="64.7" r="1.4" fill="#222"/>
<circle cx="841" cy="71.2" r="1.4" fill="#222"/>
<circle cx="844" cy="63.4" r="1.4" fill="#222"/>
<path d="M852 65 L853.5 75.5 M855.3 64.3 L857.6 73.8 M858.6 62.4 L861.6 71.8 M862.4 60.6 L865 72.4" fill="none" stroke="#f03a20" stroke-width="1.1"/>
<path d="M852 65 L862.4 60.6 M853.5 75.5 L865 72.4 M851.5 69 L861.7 67.8" fill="none" stroke="#333" stroke-width="0.7" stroke-dasharray="1,1"/>
<circle cx="852" cy="65" r="1.2" fill="#222"/>
<circle cx="855.3" cy="64.3" r="1.2" fill="#222"/>
<circle cx="858.6" cy="62.4" r="1.2" fill="#222"/>
<circle cx="862.4" cy="60.6" r="1.2" fill="#222"/>
<circle cx="851.5" cy="69" r="1.2" fill="#222"/>
<circle cx="861.7" cy="67.8" r="1.2" fill="#222"/>
<circle cx="853.5" cy="75.5" r="1.2" fill="#222"/>
<circle cx="857.6" cy="73.8" r="1.2" fill="#222"/>
<circle cx="861.6" cy="71.8" r="1.2" fill="#222"/>
<circle cx="865" cy="72.4" r="1.2" fill="#222"/>
<path d="M872.2 72.5 C 874 69, 877 68.5, 880.5 68 C 884 67.5, 887 66, 887.5 63" fill="none" stroke="#222" stroke-width="1.3"/>
<circle cx="880.5" cy="68" r="1.4" fill="#f02020"/>
<path d="M894 64 C 895 70, 897 74, 899.5 73 C 902 72, 900 62, 904 61.5 C 907 61, 908 68, 908.5 72.5" fill="none" stroke="#222" stroke-width="1.3"/>
<circle cx="902" cy="68.5" r="1.4" fill="#f02020"/>
<path d="M915.5 60.8 L930 60.3 M917.5 75.8 L929 75.5" stroke="#222" stroke-width="1.2"/><path d="M923 62.5 C 921 65, 921 68, 923 69 C 921 71, 920.5 74, 923.5 74.8 M923 62.5 C 925 65, 925 68, 923 69 C 925.5 71, 926 74, 923.5 74.8" fill="none" stroke="#222" stroke-width="1"/>
<circle cx="923" cy="62.5" r="1.5" fill="#f02020"/>
<circle cx="923.2" cy="67" r="1.5" fill="#30e030"/>
<circle cx="923.6" cy="74.5" r="1.5" fill="#30e030"/>
<path d="M936.5 60 C 936 68, 937.5 74, 940 73 C 942 72, 943 65, 945 62.5 C 947 60, 950 60, 951.5 63 C 952.5 65, 952.3 67, 952 68.5" fill="none" stroke="#222" stroke-width="1.3"/>
<line x1="938" y1="60" x2="952.5" y2="75.5" stroke="#f02020" stroke-width="1" stroke-dasharray="1.5,1"/>
<circle cx="944" cy="66.5" r="1.4" fill="#f02020"/>
<circle cx="951.3" cy="75" r="1.4" fill="#222"/>
<rect x="2.2" y="87" width="1.6" height="1" fill="#c4c4cc"/>
<rect x="2.2" y="89" width="1.6" height="1" fill="#c4c4cc"/>
<rect x="2.2" y="92" width="1.6" height="1" fill="#c4c4cc"/>
<rect x="2.2" y="94" width="1.6" height="1" fill="#c4c4cc"/>
<rect x="2.2" y="96" width="1.6" height="1" fill="#c4c4cc"/>
<rect x="2.2" y="98" width="1.6" height="1" fill="#c4c4cc"/>
<rect x="2.2" y="101" width="1.6" height="1" fill="#c4c4cc"/>
<rect x="2.2" y="103" width="1.6" height="1" fill="#c4c4cc"/>
<rect x="2.2" y="105" width="1.6" height="1" fill="#c4c4cc"/>
<circle cx="11.3" cy="103.2" r="1.5" fill="#222"/>
<path d="M14.6 91.1 C 19 92, 23 96, 24.5 100.2" fill="none" stroke="#f03a20" stroke-width="1.3"/>
<path d="M31.1 91.4 C 39 91, 45 96, 46 104.4" fill="none" stroke="#222" stroke-width="1.5"/>
<circle cx="39.4" cy="92.3" r="1.5" fill="#f02020"/>
<path d="M52.5 95.5 C 55 99, 62 99, 63.5 93.5 C 64 91.5, 63.5 90, 62.5 89" fill="none" stroke="#4a2020" stroke-width="1.5"/>
<line x1="52.5" y1="89" x2="67.5" y2="103.8" stroke="#f02020" stroke-width="1.1" stroke-dasharray="1.5,1"/>
<circle cx="61" cy="97.3" r="1.5" fill="#f02020"/>
<circle cx="67" cy="103.5" r="1.5" fill="#222"/>
<path d="M73.3 89 C 76 89, 79 89.5, 81.6 90.7 C 84.5 93, 84.5 101, 81.6 103.2 C 79 104.5, 76 105, 73.3 105" fill="none" stroke="#3040f0" stroke-width="1.3"/>
<path d="M90 89 C 87 89, 84 89.5, 81.6 90.7 C 78.7 93, 78.7 101, 81.6 103.2 C 84 104.5, 87 105, 90 105" fill="none" stroke="#30b030" stroke-width="1.3"/>
<circle cx="76" cy="97" r="1.4" fill="#222"/>
<circle cx="87.2" cy="97" r="1.4" fill="#222"/>
<circle cx="81.6" cy="90.7" r="1.5" fill="#f02020"/>
<circle cx="81.6" cy="103.2" r="1.5" fill="#f02020"/>
<circle cx="100" cy="100" r="5.3" fill="none" stroke="#30b030" stroke-width="1.1" stroke-dasharray="2,1.2"/>
<circle cx="106.5" cy="93.6" r="5.3" fill="none" stroke="#3040f0" stroke-width="1.1" stroke-dasharray="2,1.2"/>
<circle cx="99.6" cy="94.2" r="1.4" fill="#f02020"/>
<circle cx="107" cy="100" r="1.4" fill="#f02020"/>
<circle cx="121" cy="97" r="5" fill="none" stroke="#30b030" stroke-width="1.1" stroke-dasharray="1.8,1.1"/>
<line x1="116" y1="88.5" x2="132.3" y2="97.5" stroke="#f02020" stroke-width="0.9" stroke-dasharray="1.3,1"/>
<line x1="116" y1="105.5" x2="132.3" y2="97.5" stroke="#f02020" stroke-width="0.9" stroke-dasharray="1.3,1"/>
<circle cx="121" cy="97" r="1.4" fill="#222"/>
<circle cx="132.3" cy="97.5" r="1.4" fill="#222"/>
<circle cx="122.9" cy="92.2" r="1.4" fill="#f02020"/>
<circle cx="122.9" cy="102.2" r="1.4" fill="#f02020"/>
<path d="M137.8 95.5 C 141 93, 145 93, 147.5 95 C 149.5 97, 149.5 101, 148.5 105" fill="none" stroke="#30b030" stroke-width="1.3"/>
<line x1="140.5" y1="88.5" x2="152" y2="99" stroke="#f02020" stroke-width="0.9" stroke-dasharray="1.3,1"/>
<circle cx="147.7" cy="94.7" r="1.5" fill="#f02020"/>
<circle cx="153.8" cy="100.5" r="1.4" fill="#222"/>
<path d="M163 103 A8 8 0 1 1 175.5 94" fill="none" stroke="#222" stroke-width="1.3"/>
<path d="M165 100 A5 5 0 0 1 171 91.8" fill="none" stroke="#30b030" stroke-width="1.2"/>
<line x1="168" y1="97" x2="175.5" y2="95" stroke="#f02020" stroke-width="1"/>
<circle cx="168" cy="97" r="1.5" fill="#f02020"/>
<rect x="180" y="86" width="1" height="22" fill="#d8d8d8" />
<rect x="181" y="86" width="1" height="22" fill="#fbfbfb" />
<rect x="182.2" y="87" width="1.6" height="1" fill="#c4c4cc"/>
<rect x="182.2" y="89" width="1.6" height="1" fill="#c4c4cc"/>
<rect x="182.2" y="92" width="1.6" height="1" fill="#c4c4cc"/>
<rect x="182.2" y="94" width="1.6" height="1" fill="#c4c4cc"/>
<rect x="182.2" y="96" width="1.6" height="1" fill="#c4c4cc"/>
<rect x="182.2" y="98" width="1.6" height="1" fill="#c4c4cc"/>
<rect x="182.2" y="101" width="1.6" height="1" fill="#c4c4cc"/>
<rect x="182.2" y="103" width="1.6" height="1" fill="#c4c4cc"/>
<rect x="182.2" y="105" width="1.6" height="1" fill="#c4c4cc"/>
<path d="M194 104 C 201 100, 205 94, 204 91 C 203 88, 198 90, 196 92" fill="none" stroke="#f03a20" stroke-width="1.1"/>
<circle cx="196.5" cy="97.3" r="1.5" fill="#222"/>
<rect x="209.5" y="86" width="1" height="22" fill="#d8d8d8" />
<rect x="210.5" y="86" width="1" height="22" fill="#fbfbfb" />
<rect x="211.7" y="87" width="1.6" height="1" fill="#c4c4cc"/>
<rect x="211.7" y="89" width="1.6" height="1" fill="#c4c4cc"/>
<rect x="211.7" y="92" width="1.6" height="1" fill="#c4c4cc"/>
<rect x="211.7" y="94" width="1.6" height="1" fill="#c4c4cc"/>
<rect x="211.7" y="96" width="1.6" height="1" fill="#c4c4cc"/>
<rect x="211.7" y="98" width="1.6" height="1" fill="#c4c4cc"/>
<rect x="211.7" y="101" width="1.6" height="1" fill="#c4c4cc"/>
<rect x="211.7" y="103" width="1.6" height="1" fill="#c4c4cc"/>
<rect x="211.7" y="105" width="1.6" height="1" fill="#c4c4cc"/>
<rect x="219.5" y="89.5" width="15" height="15" fill="none" stroke="#333" stroke-width="0.7" stroke-dasharray="1,1"/>
<rect x="222" y="92" width="6" height="6" fill="#111"/><rect x="226" y="96" width="6" height="6" fill="#111"/>
<circle cx="219.5" cy="89.5" r="1.5" fill="#f02020"/>
<circle cx="234.5" cy="89.5" r="1.5" fill="#f02020"/>
<circle cx="219.5" cy="104.5" r="1.5" fill="#f02020"/>
<circle cx="234.5" cy="104.5" r="1.5" fill="#f02020"/>
<path d="M243 94 A6.5 6.5 0 1 1 242.5 100" fill="none" stroke="#111" stroke-width="1.7"/>
<path d="M239.5 92.5 L245.5 94.5 L241 97.5 Z" fill="#111"/>
<circle cx="248.5" cy="97" r="1.7" fill="#f02020"/>
<rect x="262" y="89.5" width="16" height="15" fill="none" stroke="#222" stroke-width="1.3"/>
<line x1="262" y1="104.5" x2="278" y2="89.5" stroke="#222" stroke-width="2.2"/>
<path d="M265 104.5 L278 92 L278 104.5 Z" fill="none" stroke="#e03050" stroke-width="1.2"/>
<circle cx="262" cy="104.5" r="1.5" fill="#222"/>
<circle cx="278" cy="89.5" r="1.5" fill="#222"/>
<path d="M290 90 L284 104 L290 104 Z" fill="none" stroke="#222" stroke-width="1.2"/>
<path d="M293 90 L299 104 L293 104 Z" fill="none" stroke="#e03050" stroke-width="1.2"/>
<line x1="291.5" y1="88" x2="291.5" y2="106" stroke="#222" stroke-width="0.9" stroke-dasharray="1.5,1"/>
<circle cx="306.3" cy="103.2" r="2.2" fill="#222"/>
<line x1="306.3" y1="103.2" x2="314" y2="95.5" stroke="#111" stroke-width="2.2"/>
<path d="M317 91.5 L316.5 99 L309.5 92.5 Z" fill="#111"/>
<circle cx="319.5" cy="90" r="2" fill="#f02020"/>
<line x1="326.5" y1="92" x2="342.5" y2="89.5" stroke="#222" stroke-width="1.1"/>
<line x1="333.5" y1="91" x2="336" y2="104.5" stroke="#222" stroke-width="1.3"/>
<line x1="337" y1="90.5" x2="334" y2="104.5" stroke="#222" stroke-width="1.2"/>
<circle cx="326.5" cy="92" r="1.4" fill="#222"/>
<circle cx="342.5" cy="89.5" r="1.4" fill="#222"/>
<circle cx="334.5" cy="104.5" r="1.4" fill="#222"/>
<circle cx="333" cy="91" r="1.4" fill="#f02020"/>
<circle cx="337" cy="90.5" r="1.4" fill="#f02020"/>
<rect x="346.5" y="86" width="1" height="22" fill="#d8d8d8" />
<rect x="347.5" y="86" width="1" height="22" fill="#fbfbfb" />
<rect x="348.7" y="87" width="1.6" height="1" fill="#c4c4cc"/>
<rect x="348.7" y="89" width="1.6" height="1" fill="#c4c4cc"/>
<rect x="348.7" y="92" width="1.6" height="1" fill="#c4c4cc"/>
<rect x="348.7" y="94" width="1.6" height="1" fill="#c4c4cc"/>
<rect x="348.7" y="96" width="1.6" height="1" fill="#c4c4cc"/>
<rect x="348.7" y="98" width="1.6" height="1" fill="#c4c4cc"/>
<rect x="348.7" y="101" width="1.6" height="1" fill="#c4c4cc"/>
<rect x="348.7" y="103" width="1.6" height="1" fill="#c4c4cc"/>
<rect x="348.7" y="105" width="1.6" height="1" fill="#c4c4cc"/>
<g transform="translate(26,73)"><path d="M331.2 19.3 L334.3 17.4 L335.5 20.2 L336.1 17.4 L337.7 16.5 L341.6 18.3 L341.6 26 L338 33.3 L329.3 32.3 L329.3 27.4 L331.8 24.6 L332.4 21.8 Z" fill="#fbfbfb" stroke="#b4b4b4" stroke-width="0.6" stroke-linejoin="round"/><path d="M337.9 25.3 H341.6 V27.4 H343.9 V31 H341.6 V33.6 H337.9 V31 H335.3 V27.4 H337.9 Z" fill="#7ab050" stroke="#5a8a3a" stroke-width="0.4"/></g>
<path d="M388 89.5 L392.5 94 L389 97 C 388 101, 385 103, 379.5 104.5 C 381 99, 383 96, 386 95 Z" fill="#fff" stroke="#111" stroke-width="1.2"/><path d="M385.5 96.5 L380.5 103.5" stroke="#111" stroke-width="0.8"/><circle cx="385.8" cy="97.5" r="0.9" fill="#111"/>
<circle cx="379" cy="104.8" r="1.5" fill="#f02020"/>
<g fill="none" stroke="#111" stroke-width="1.7"><rect x="397.5" y="95" width="11" height="5.6" rx="2.8" transform="rotate(-45 403 97.8)"/><rect x="403" y="90" width="11" height="5.6" rx="2.8" transform="rotate(-45 408.5 92.8)"/></g><circle cx="411.5" cy="101.8" r="4" fill="#111"/><path d="M409.2 101.8 H413.8 M411.5 99.5 V104.1" stroke="#fff" stroke-width="1.3"/>
<path d="M421 89.5 C 426 91, 431 91, 436 89.5 C 434.5 95, 434.5 99, 436 104.5 C 431 103, 426 103, 421 104.5 C 422.5 99, 422.5 95, 421 89.5 Z" fill="none" stroke="#333" stroke-width="1.1"/>
<line x1="422" y1="103.5" x2="435" y2="90.5" stroke="#f02020" stroke-width="1.1" stroke-dasharray="1.5,0.8"/>
<circle cx="421" cy="89.5" r="1.4" fill="#3a1010"/>
<circle cx="436" cy="89.5" r="1.4" fill="#3a1010"/>
<circle cx="421" cy="104.5" r="1.4" fill="#3a1010"/>
<circle cx="436" cy="104.5" r="1.4" fill="#3a1010"/>
<rect x="440.5" y="86" width="1" height="22" fill="#d8d8d8" />
<rect x="441.5" y="86" width="1" height="22" fill="#fbfbfb" />
<rect x="442.7" y="87" width="1.6" height="1" fill="#c4c4cc"/>
<rect x="442.7" y="89" width="1.6" height="1" fill="#c4c4cc"/>
<rect x="442.7" y="92" width="1.6" height="1" fill="#c4c4cc"/>
<rect x="442.7" y="94" width="1.6" height="1" fill="#c4c4cc"/>
<rect x="442.7" y="96" width="1.6" height="1" fill="#c4c4cc"/>
<rect x="442.7" y="98" width="1.6" height="1" fill="#c4c4cc"/>
<rect x="442.7" y="101" width="1.6" height="1" fill="#c4c4cc"/>
<rect x="442.7" y="103" width="1.6" height="1" fill="#c4c4cc"/>
<rect x="442.7" y="105" width="1.6" height="1" fill="#c4c4cc"/>
<path d="M450.5 91.5 H463 C 466 93, 466.5 96, 466 99 C 465 102, 461 103, 458.5 101.5 L457 100.5 H450.5 Z" fill="#f6f6f6" stroke="#8a8a8a" stroke-width="0.9"/>
<path d="M473 91 H481.5 L485.8 95 V105 H473 Z" fill="#e6e6e6" stroke="#d0d0d0" stroke-width="0.6"/><path d="M474.5 97 H479 V95 L483 98 L479 101 V99 H474.5 Z" fill="#a8a8a8"/>
<rect x="491.5" y="86" width="1" height="22" fill="#d8d8d8" />
<rect x="492.5" y="86" width="1" height="22" fill="#fbfbfb" />
<rect x="493.7" y="87" width="1.6" height="1" fill="#c4c4cc"/>
<rect x="493.7" y="89" width="1.6" height="1" fill="#c4c4cc"/>
<rect x="493.7" y="92" width="1.6" height="1" fill="#c4c4cc"/>
<rect x="493.7" y="94" width="1.6" height="1" fill="#c4c4cc"/>
<rect x="493.7" y="96" width="1.6" height="1" fill="#c4c4cc"/>
<rect x="493.7" y="98" width="1.6" height="1" fill="#c4c4cc"/>
<rect x="493.7" y="101" width="1.6" height="1" fill="#c4c4cc"/>
<rect x="493.7" y="103" width="1.6" height="1" fill="#c4c4cc"/>
<rect x="493.7" y="105" width="1.6" height="1" fill="#c4c4cc"/>
<g transform="translate(509,97)"><circle r="6.3" fill="none" stroke="#cfcfcf" stroke-width="3" stroke-dasharray="2,1.5"/><circle r="5" fill="#e6e6e6" stroke="#c8c8c8" stroke-width="0.6"/><circle r="3.2" fill="#8a8a8a"/><path d="M-1.5 -1 L1.5 -1 L0 1.8 Z" fill="#eee"/></g>
<path d="M523.5 89.5 H532.5 L536.5 93.5 V105 H523.5 Z" fill="#f0f0f0" stroke="#d8d8d8" stroke-width="0.8"/><path d="M527.5 99 C 528 95, 533 94, 535 97.5" fill="none" stroke="#8a8a8a" stroke-width="2"/><path d="M532.5 98.5 L538 97 L535.5 102 Z" fill="#8a8a8a"/>
<rect x="2.2" y="111" width="1.6" height="1" fill="#c4c4cc"/>
<rect x="2.2" y="113" width="1.6" height="1" fill="#c4c4cc"/>
<rect x="2.2" y="116" width="1.6" height="1" fill="#c4c4cc"/>
<rect x="2.2" y="118" width="1.6" height="1" fill="#c4c4cc"/>
<rect x="2.2" y="120" width="1.6" height="1" fill="#c4c4cc"/>
<rect x="2.2" y="122" width="1.6" height="1" fill="#c4c4cc"/>
<rect x="2.2" y="125" width="1.6" height="1" fill="#c4c4cc"/>
<rect x="2.2" y="127" width="1.6" height="1" fill="#c4c4cc"/>
<rect x="7.5" y="114.5" width="131" height="12" fill="#ffffff" stroke="#7a7a7a" stroke-width="1" />
<text x="9.9" y="123.2" font-size="9" fill="#000000" stroke="#000000" stroke-width="0.2" textLength="43.4" lengthAdjust="spacingAndGlyphs" >Poppins Light</text>
<path d="M129 119 L131.6 121.6 L134.2 119" fill="none" stroke="#444" stroke-width="0.8"/>
<rect x="138.5" y="114.5" width="24.5" height="12" fill="#e5e5e5" stroke="#c0c0c0" stroke-width="1" />
<text x="140.7" y="123.2" font-size="9" fill="#000000" stroke="#000000" stroke-width="0.2" textLength="8" lengthAdjust="spacingAndGlyphs" >16</text>
<path d="M153.5 119 L156 121.5 L158.5 119" fill="none" stroke="#444" stroke-width="0.8"/>
<rect x="163.5" y="110.5" width="21" height="19" fill="#cce4f7" stroke="#99c9ef" stroke-width="1" />
<path d="M166.5 120.5 C 169 116, 172 115, 175 115 C 178 115, 181 116, 183.5 120.5 C 181 125, 178 126, 175 126 C 172 126, 169 125, 166.5 120.5 Z" fill="#fff" stroke="#444" stroke-width="1.7"/><circle cx="175" cy="120.5" r="3.6" fill="#444"/><circle cx="173.8" cy="119.3" r="0.9" fill="#aaa"/>
<path d="M190 126 L194.5 115.5 L195.5 115.5 L200 126 M191.8 122 H198.2" fill="none" stroke="#111" stroke-width="1.6"/><path d="M199.5 117.5 L201.2 115 L202.9 117.5 Z" fill="#3a7ad8"/>
<path d="M212 126 L215.5 118 L216.5 118 L220 126 M213.5 123 H218.5" fill="none" stroke="#111" stroke-width="1.4"/><path d="M220.5 115.5 L222.2 118 L223.9 115.5 Z" fill="#3a7ad8"/>
<path d="M236.5 117.5 L240.5 113.5 L246 119 L242 123 Z" fill="#b4b4b4" stroke="#a0a0a0" stroke-width="0.6"/><path d="M240 116 V112" stroke="#333" stroke-width="0.8"/><circle cx="240" cy="117.5" r="0.8" fill="#222"/><path d="M233 123.5 C 232.5 119.5, 234 116.8, 237.5 116.8" fill="none" stroke="#3a7ad8" stroke-width="1.4"/><path d="M231.5 127 L234 121.5 L236.5 127 M232.3 125.3 H235.7" fill="none" stroke="#111" stroke-width="1"/>
<rect x="250.5" y="110" width="1" height="21" fill="#d8d8d8" />
<rect x="251.5" y="110" width="1" height="21" fill="#fbfbfb" />
<rect x="253.2" y="111" width="1.6" height="1" fill="#c4c4cc"/>
<rect x="253.2" y="113" width="1.6" height="1" fill="#c4c4cc"/>
<rect x="253.2" y="116" width="1.6" height="1" fill="#c4c4cc"/>
<rect x="253.2" y="118" width="1.6" height="1" fill="#c4c4cc"/>
<rect x="253.2" y="120" width="1.6" height="1" fill="#c4c4cc"/>
<rect x="253.2" y="122" width="1.6" height="1" fill="#c4c4cc"/>
<rect x="253.2" y="125" width="1.6" height="1" fill="#c4c4cc"/>
<rect x="253.2" y="127" width="1.6" height="1" fill="#c4c4cc"/>
<path d="M263 116.5 H273 V125.5 H263 Z" fill="none" stroke="#333" stroke-width="1.2"/><circle cx="263" cy="125" r="2.3" fill="#fff" stroke="#3a6ad0" stroke-width="1"/><circle cx="273" cy="116.5" r="2.3" fill="#fff" stroke="#3a6ad0" stroke-width="1"/>
<path d="M282.5 127 C 282 118, 283 114, 285 114.5 C 288 115, 288 124, 290 125 C 292 125.5, 295 117, 297 115" fill="none" stroke="#333" stroke-width="1.1"/><path d="M282.5 114 L290 125 L297 115" fill="none" stroke="#9090f0" stroke-width="0.6"/>
<rect x="281.5" y="113" width="2" height="2" fill="#3a6ad0"/>
<rect x="281.5" y="126" width="2" height="2" fill="#3a6ad0"/>
<rect x="289" y="124" width="2" height="2" fill="#3a6ad0"/>
<rect x="296" y="114" width="2" height="2" fill="#3a6ad0"/>
<rect x="286" y="113" width="2" height="2" fill="#3a6ad0"/>
<path d="M304 120.5 H318.5 M311.2 113.5 V127.5" stroke="#222" stroke-width="1.3"/><circle cx="311.2" cy="120.5" r="3.3" fill="none" stroke="#3a6ad0" stroke-width="1.4"/>
<rect x="0" y="132" width="73" height="14" fill="#d9d9d9" />
<text x="3.1" y="142.9" font-size="9.5" fill="#000000" stroke="#000000" stroke-width="0.2" textLength="30.8" lengthAdjust="spacingAndGlyphs" >Toolbox</text>
<rect x="47.5" y="138.5" width="4" height="3.5" fill="none" stroke="#333" stroke-width="1"/><path d="M49 138.5 V136.8 H53 V140.5 H51.5" fill="none" stroke="#333" stroke-width="1"/>
<path d="M62 137 L67 142 M67 137 L62 142" stroke="#222" stroke-width="1.2"/>
<rect x="0" y="147" width="70" height="17" fill="#f0f0f0" />
<rect x="0" y="147" width="69" height="1" fill="#fafafa" />
<rect x="69" y="147" width="1" height="17" fill="#b4b4b4" />
<rect x="0" y="163" width="70" height="1" fill="#b4b4b4" />
<text x="14.8" y="158.8" font-size="10" fill="#000000" stroke="#000000" stroke-width="0.2" textLength="24.2" lengthAdjust="spacingAndGlyphs" >Punto</text>
<circle cx="7" cy="155.3" r="2.8" fill="#111"/>
<rect x="0" y="166" width="57" height="106" fill="#f0f0f0" />
<rect x="5.5" y="171.5" width="21" height="18" fill="#cce4f7" stroke="#3c7fb1" stroke-width="1" />
<rect x="31.5" y="171.5" width="21" height="18" fill="#e1e1e1" stroke="#adadad" stroke-width="1" />
<rect x="5.5" y="193.5" width="21" height="18" fill="#e1e1e1" stroke="#adadad" stroke-width="1" />
<rect x="31.5" y="193.5" width="21" height="18" fill="#e1e1e1" stroke="#adadad" stroke-width="1" />
<rect x="5.5" y="215.5" width="21" height="18" fill="#e1e1e1" stroke="#adadad" stroke-width="1" />
<rect x="31.5" y="215.5" width="21" height="18" fill="#e1e1e1" stroke="#adadad" stroke-width="1" />
<rect x="5.5" y="237.5" width="21" height="18" fill="#e1e1e1" stroke="#adadad" stroke-width="1" />
<rect x="31.5" y="237.5" width="21" height="18" fill="#e1e1e1" stroke="#adadad" stroke-width="1" />
<rect x="5.5" y="259.5" width="21" height="18" fill="#e1e1e1" stroke="#adadad" stroke-width="1" />
<rect x="31.5" y="259.5" width="21" height="18" fill="#e1e1e1" stroke="#adadad" stroke-width="1" />
<rect x="0" y="272" width="57" height="15" fill="#f0f0f0" />
<path d="M12.5 174 L12.5 186 L15.5 183.3 L17.8 188.5 L19.8 187.6 L17.5 182.5 L21.5 182.4 Z" fill="#fff" stroke="#555" stroke-width="0.9" stroke-linejoin="round"/>
<line x1="36" y1="174" x2="48" y2="187" stroke="#222" stroke-width="1.3"/>
<circle cx="36" cy="174" r="1.4" fill="#222"/>
<circle cx="48" cy="187" r="1.4" fill="#222"/>
<circle cx="42" cy="180.5" r="1.4" fill="#f02020"/>
<line x1="10" y1="196" x2="22" y2="209" stroke="#f02020" stroke-width="1.3"/>
<circle cx="10" cy="196" r="1.4" fill="#222"/>
<circle cx="22" cy="209" r="1.4" fill="#f02020"/>
<line x1="36" y1="196" x2="48" y2="209" stroke="#222" stroke-width="1.3"/>
<circle cx="36" cy="196" r="1.4" fill="#222"/>
<circle cx="48" cy="209" r="1.4" fill="#222"/>
<circle cx="40.5" cy="200.5" r="1.4" fill="#f02020"/>
<line x1="10" y1="218" x2="10" y2="231" stroke="#f02020" stroke-width="1.3"/>
<line x1="10" y1="231" x2="22" y2="231" stroke="#222" stroke-width="1.3"/>
<circle cx="10" cy="218" r="1.4" fill="#f02020"/>
<circle cx="10" cy="231" r="1.4" fill="#222"/>
<circle cx="22" cy="231" r="1.4" fill="#222"/>
<line x1="35.5" y1="231" x2="37.5" y2="218" stroke="#222" stroke-width="1.3"/>
<line x1="35.5" y1="231" x2="48" y2="229" stroke="#222" stroke-width="1.3"/>
<line x1="35.5" y1="231" x2="45" y2="221.5" stroke="#f02020" stroke-width="1.3"/>
<circle cx="35.5" cy="231" r="1.4" fill="#222"/>
<circle cx="37.5" cy="218" r="1.4" fill="#222"/>
<circle cx="48" cy="229" r="1.4" fill="#222"/>
<circle cx="45" cy="221.5" r="1.4" fill="#f02020"/>
<line x1="11" y1="240.5" x2="8.5" y2="249.5" stroke="#222" stroke-width="1.3"/>
<line x1="11" y1="240.5" x2="23" y2="253" stroke="#222" stroke-width="0.9" stroke-dasharray="1.5,1"/>
<line x1="8.5" y1="249.5" x2="23" y2="253" stroke="#f02020" stroke-width="1.3"/>
<circle cx="11" cy="240.5" r="1.4" fill="#222"/>
<circle cx="8.5" cy="249.5" r="1.4" fill="#222"/>
<circle cx="16.5" cy="251" r="1.4" fill="#222"/>
<circle cx="23" cy="253" r="1.5" fill="#f02020"/>
<path d="M35 240 C 34 236, 40 239, 45 244 C 48 247, 50 250, 47 251 C 43 252, 38 251, 35 248 C 33 245, 34 242, 35 240 Z" fill="none" stroke="#1a2ae0" stroke-width="1.3"/>
<circle cx="43.5" cy="242.5" r="1.3" fill="#222"/>
<circle cx="34.5" cy="249" r="1.3" fill="#222"/>
<circle cx="40" cy="251" r="1.4" fill="#f02020"/>
<circle cx="49.5" cy="253" r="1.3" fill="#222"/>
<line x1="40" y1="251" x2="49.5" y2="253" stroke="#222" stroke-width="1"/>
<line x1="8.5" y1="271" x2="13" y2="269" stroke="#222" stroke-width="1.2"/>
<line x1="13" y1="269" x2="14" y2="262" stroke="#222" stroke-width="0.9" stroke-dasharray="1.2,1"/>
<line x1="14" y1="262" x2="22" y2="266" stroke="#222" stroke-width="0.9" stroke-dasharray="1.2,1"/>
<circle cx="8.5" cy="271" r="1.3" fill="#222"/>
<circle cx="13" cy="269" r="1.3" fill="#222"/>
<circle cx="14" cy="262" r="1.3" fill="#222"/>
<circle cx="22" cy="266" r="1.4" fill="#f02020"/>
<line x1="35" y1="271" x2="47" y2="271" stroke="#222" stroke-width="1.1" stroke-dasharray="1.3,1"/>
<line x1="44.5" y1="260" x2="44.5" y2="272" stroke="#222" stroke-width="1.1" stroke-dasharray="1.3,1"/>
<circle cx="44.5" cy="265" r="1.3" fill="#222"/>
<circle cx="35" cy="271" r="1.3" fill="#222"/>
<circle cx="44.5" cy="271" r="1.4" fill="#f02020"/>
<rect x="57.5" y="166" width="12" height="106" fill="#f0f0f0" />
<path d="M61.5 174.5 L63.7 172.2 L65.9 174.5" fill="none" stroke="#444" stroke-width="1.3"/>
<rect x="57" y="166" width="1" height="106" fill="#f8f8f8" />
<rect x="58.5" y="178.5" width="10.5" height="61.5" fill="#cdcdcd" />
<path d="M61.3 264.3 L63.7 266.7 L66.1 264.3" fill="none" stroke="#444" stroke-width="1.3"/>
<rect x="0" y="273" width="57" height="11" fill="#f0f0f0" />
<path d="M7 276.3 L4.6 278.7 L7 281.1" fill="none" stroke="#444" stroke-width="1.3"/>
<rect x="12" y="273.5" width="32.7" height="10" fill="#cdcdcd" />
<path d="M50 276.3 L52.4 278.7 L50 281.1" fill="none" stroke="#444" stroke-width="1.3"/>
<rect x="69.5" y="147" width="1" height="140" fill="#f0f0f0" />
<rect x="0" y="287" width="70" height="17" fill="#f0f0f0" />
<rect x="0" y="287" width="69" height="1" fill="#fafafa" />
<rect x="69" y="287" width="1" height="17" fill="#b4b4b4" />
<rect x="0" y="303" width="70" height="1" fill="#b4b4b4" />
<text x="14.8" y="298.7" font-size="10" fill="#000000" stroke="#000000" stroke-width="0.2" textLength="22" lengthAdjust="spacingAndGlyphs" >Línea</text>
<path d="M3 302 L11 294" stroke="#333" stroke-width="0.9"/>
<rect x="0" y="306" width="70" height="16.5" fill="#f0f0f0" />
<rect x="0" y="306" width="69" height="1" fill="#fafafa" />
<rect x="69" y="306" width="1" height="16.5" fill="#b4b4b4" />
<rect x="0" y="321.5" width="70" height="1" fill="#b4b4b4" />
<text x="14.8" y="318" font-size="10" fill="#000000" stroke="#000000" stroke-width="0.2" textLength="24.5" lengthAdjust="spacingAndGlyphs" >Curva</text>
<path d="M3 311.5 H11 M9 310 L11 311.5 L9 313" fill="none" stroke="#222" stroke-width="0.9"/><path d="M4.5 312 C 5 315, 4 317, 3.5 318.5" fill="none" stroke="#7890b0" stroke-width="0.8"/>
<rect x="0" y="325" width="70" height="17" fill="#f0f0f0" />
<rect x="0" y="325" width="69" height="1" fill="#fafafa" />
<rect x="69" y="325" width="1" height="17" fill="#b4b4b4" />
<rect x="0" y="341" width="70" height="1" fill="#b4b4b4" />
<text x="14.8" y="336.7" font-size="10" fill="#000000" stroke="#000000" stroke-width="0.2" textLength="20" lengthAdjust="spacingAndGlyphs" >Arco</text>
<path d="M9.5 329.5 A4 4 0 1 0 10.5 335" fill="none" stroke="#506080" stroke-width="0.9"/>
<rect x="0" y="344" width="70" height="16.5" fill="#f0f0f0" />
<rect x="0" y="344" width="69" height="1" fill="#fafafa" />
<rect x="69" y="344" width="1" height="16.5" fill="#b4b4b4" />
<rect x="0" y="359.5" width="70" height="1" fill="#b4b4b4" />
<text x="14.8" y="356.1" font-size="10" fill="#000000" stroke="#000000" stroke-width="0.2" textLength="52" lengthAdjust="spacingAndGlyphs" >Arco Elípti...</text>
<path d="M4 355 C 3 352, 5 350, 6 352 C 7 355, 9 353, 10.5 349" fill="none" stroke="#506080" stroke-width="0.9"/>
<rect x="0" y="363" width="70" height="17" fill="#f0f0f0" />
<rect x="0" y="363" width="69" height="1" fill="#fafafa" />
<rect x="69" y="363" width="1" height="17" fill="#b4b4b4" />
<rect x="0" y="379" width="70" height="1" fill="#b4b4b4" />
<text x="14.8" y="375.7" font-size="10" fill="#000000" stroke="#000000" stroke-width="0.2" textLength="51.5" lengthAdjust="spacingAndGlyphs" >Operacion...</text>
<path d="M3 366 H7 M3 366 V373 M3 373 H7" fill="none" stroke="#4a7ad8" stroke-width="0.9" stroke-dasharray="1.2,0.8"/><path d="M7 368 L7 376 L9 374.5 L10.5 377 L11.3 376.5 L10 374 L12 374 Z" fill="#fff" stroke="#666" stroke-width="0.6"/>
<rect x="0" y="382.5" width="70" height="17.0" fill="#f0f0f0" />
<rect x="0" y="382.5" width="69" height="1" fill="#fafafa" />
<rect x="69" y="382.5" width="1" height="17.0" fill="#b4b4b4" />
<rect x="0" y="398.5" width="70" height="1" fill="#b4b4b4" />
<text x="14.8" y="394.7" font-size="10" fill="#000000" stroke="#000000" stroke-width="0.2" textLength="49.8" lengthAdjust="spacingAndGlyphs" >Add Details</text>
<rect x="2.5" y="386.5" width="8.5" height="8" fill="#fff" stroke="#555" stroke-width="1.4"/><rect x="2" y="386" width="9.5" height="9" fill="none" stroke="#4a7ad8" stroke-width="0.6"/>
<rect x="0" y="402" width="70" height="16.5" fill="#f0f0f0" />
<rect x="0" y="402" width="69" height="1" fill="#fafafa" />
<rect x="69" y="402" width="1" height="16.5" fill="#b4b4b4" />
<rect x="0" y="417.5" width="70" height="1" fill="#b4b4b4" />
<text x="14.8" y="413.6" font-size="10" fill="#000000" stroke="#000000" stroke-width="0.2" textLength="49.5" lengthAdjust="spacingAndGlyphs" >Pattern Pi...</text>
<path d="M3 405 V414.5 H11.5 V409 H6.5 V405 Z" fill="none" stroke="#555" stroke-width="1.2"/><rect x="2" y="404" width="2" height="2" fill="#3a6ad0"/><rect x="10.5" y="413.5" width="2" height="2" fill="#3a6ad0"/>
<rect x="0" y="421" width="70" height="17" fill="#f0f0f0" />
<rect x="0" y="421" width="69" height="1" fill="#fafafa" />
<rect x="69" y="421" width="1" height="17" fill="#b4b4b4" />
<rect x="0" y="437" width="70" height="1" fill="#b4b4b4" />
<text x="14.8" y="432.6" font-size="10" fill="#000000" stroke="#000000" stroke-width="0.2" textLength="29.5" lengthAdjust="spacingAndGlyphs" >Diseño</text>
<circle cx="5" cy="431" r="2.3" fill="#223a80"/><circle cx="9.5" cy="426.5" r="2" fill="#3a6ad0"/><circle cx="5" cy="431" r="0.8" fill="#fff"/>
<rect x="78" y="134" width="889" height="619" fill="#ffffff" />
<rect x="78" y="134" width="889" height="1" fill="#aeb2ba" />
<rect x="78" y="134" width="1" height="619" fill="#aeb2ba" />
<rect x="77" y="134" width="1" height="619" fill="#d0d0d0" />
<rect x="78" y="752" width="889" height="1" fill="#a8a8b0" />
<rect x="0" y="755" width="967" height="1" fill="#fafafa" />
<rect x="79" y="747" width="888" height="5" fill="#f0f0f0" />
<rect x="90" y="747" width="696" height="5" fill="#cdcdcd" />
<path d="M87 747.5 L84.5 749.5 L87 751.5" fill="none" stroke="#606060" stroke-width="1"/>
<line x1="433.0" y1="304.4" x2="513.3" y2="298.0" stroke="#333333" stroke-width="0.85" stroke-dasharray="1.6,0.6"/>
<line x1="513.3" y1="298.0" x2="602.3" y2="290.3" stroke="#333333" stroke-width="0.85" stroke-dasharray="1.6,0.6"/>
<line x1="602.3" y1="290.3" x2="720.8" y2="281.2" stroke="#333333" stroke-width="0.85" stroke-dasharray="1.6,0.6"/>
<line x1="433.0" y1="304.4" x2="433.2" y2="627.5" stroke="#333333" stroke-width="0.85" stroke-dasharray="1.6,0.6"/>
<line x1="513.3" y1="298.0" x2="513.3" y2="627.8" stroke="#333333" stroke-width="0.85" stroke-dasharray="1.6,0.6"/>
<line x1="602.3" y1="290.3" x2="602.5" y2="458.3" stroke="#333333" stroke-width="0.85" stroke-dasharray="1.6,0.6"/>
<line x1="743.4" y1="279.3" x2="743.2" y2="589.3" stroke="#333333" stroke-width="0.85" stroke-dasharray="1.6,0.6"/>
<line x1="602.5" y1="458.3" x2="593.5" y2="628.3" stroke="#333333" stroke-width="0.85" stroke-dasharray="1.6,0.6"/>
<line x1="602.5" y1="458.3" x2="667.5" y2="615.5" stroke="#333333" stroke-width="0.85" stroke-dasharray="1.6,0.6"/>
<line x1="433.2" y1="627.5" x2="513.3" y2="627.8" stroke="#333333" stroke-width="0.85" stroke-dasharray="1.6,0.6"/>
<line x1="513.3" y1="627.8" x2="593.5" y2="628.3" stroke="#333333" stroke-width="0.85" stroke-dasharray="1.6,0.6"/>
<line x1="667.5" y1="615.5" x2="743.2" y2="589.3" stroke="#333333" stroke-width="0.85" stroke-dasharray="1.6,0.6"/>
<line x1="743.2" y1="589.3" x2="900.8" y2="534.1" stroke="#333333" stroke-width="0.85" stroke-dasharray="1.6,0.6"/>
<line x1="900.8" y1="534.1" x2="866.5" y2="380.1" stroke="#333333" stroke-width="0.85" stroke-dasharray="1.6,0.6"/>
<path d="M720.8 281.2 C 740 325, 800 375, 866.5 380.1" fill="none" stroke="#4444ff" stroke-width="1"/>
<line x1="715.5" y1="263.8" x2="719.6" y2="278" stroke="#7fc47f" stroke-width="0.9"/>
<line x1="578" y1="435.4" x2="600" y2="456" stroke="#7fc47f" stroke-width="0.9"/>
<line x1="551" y1="473.5" x2="572.3" y2="493.8" stroke="#7fc47f" stroke-width="0.9"/>
<circle cx="433.0" cy="304.4" r="3.3" fill="none" stroke="#3f9f3f" stroke-width="0.95"/>
<circle cx="433.0" cy="304.4" r="0.7" fill="#222"/>
<circle cx="513.3" cy="298.0" r="3.3" fill="none" stroke="#3f9f3f" stroke-width="0.95"/>
<circle cx="513.3" cy="298.0" r="0.7" fill="#222"/>
<circle cx="602.3" cy="290.3" r="3.3" fill="none" stroke="#3f9f3f" stroke-width="0.95"/>
<circle cx="602.3" cy="290.3" r="0.7" fill="#222"/>
<circle cx="668.3" cy="288.6" r="3.3" fill="none" stroke="#3f9f3f" stroke-width="0.95"/>
<circle cx="720.8" cy="281.2" r="3.3" fill="none" stroke="#3f9f3f" stroke-width="0.95"/>
<circle cx="720.8" cy="281.2" r="0.7" fill="#222"/>
<circle cx="743.4" cy="279.3" r="3.3" fill="none" stroke="#3f9f3f" stroke-width="0.95"/>
<circle cx="743.4" cy="279.3" r="0.7" fill="#222"/>
<circle cx="866.5" cy="380.1" r="3.3" fill="none" stroke="#3f9f3f" stroke-width="0.95"/>
<circle cx="866.5" cy="380.1" r="0.7" fill="#222"/>
<circle cx="900.8" cy="534.1" r="3.3" fill="none" stroke="#3f9f3f" stroke-width="0.95"/>
<circle cx="900.8" cy="534.1" r="0.7" fill="#222"/>
<circle cx="743.2" cy="589.3" r="3.3" fill="none" stroke="#3f9f3f" stroke-width="0.95"/>
<circle cx="743.2" cy="589.3" r="0.7" fill="#222"/>
<circle cx="667.5" cy="615.5" r="3.3" fill="none" stroke="#3f9f3f" stroke-width="0.95"/>
<circle cx="667.5" cy="615.5" r="0.7" fill="#222"/>
<circle cx="593.5" cy="628.3" r="3.3" fill="none" stroke="#3f9f3f" stroke-width="0.95"/>
<circle cx="593.5" cy="628.3" r="0.7" fill="#222"/>
<circle cx="513.3" cy="627.8" r="3.3" fill="none" stroke="#3f9f3f" stroke-width="0.95"/>
<circle cx="513.3" cy="627.8" r="0.7" fill="#222"/>
<circle cx="433.2" cy="627.5" r="3.3" fill="none" stroke="#3f9f3f" stroke-width="0.95"/>
<circle cx="433.2" cy="627.5" r="0.7" fill="#222"/>
<circle cx="602.5" cy="458.3" r="3.3" fill="none" stroke="#3f9f3f" stroke-width="0.95"/>
<circle cx="602.5" cy="458.3" r="0.7" fill="#222"/>
<circle cx="574.8" cy="496.2" r="3.3" fill="none" stroke="#3f9f3f" stroke-width="0.95"/>
<circle cx="534.4" cy="333.6" r="3.3" fill="none" stroke="#3f9f3f" stroke-width="0.95"/>
<circle cx="449.6" cy="362.1" r="3.3" fill="none" stroke="#3f9f3f" stroke-width="0.95"/>
<circle cx="373.2" cy="387.5" r="3.3" fill="none" stroke="#3f9f3f" stroke-width="0.95"/>
<circle cx="607.4" cy="663.5" r="3.3" fill="none" stroke="#3f9f3f" stroke-width="0.95"/>
<circle cx="675.7" cy="633.4" r="3.3" fill="none" stroke="#3f9f3f" stroke-width="0.95"/>
<circle cx="451.5" cy="701.0" r="3.3" fill="none" stroke="#3f9f3f" stroke-width="0.95"/>
<text x="435.5" y="321.4" font-size="11" fill="#4aa84a" textLength="29.5" lengthAdjust="spacingAndGlyphs" >A61a2</text>
<text x="515.5" y="315.2" font-size="11" fill="#4aa84a" textLength="17.8" lengthAdjust="spacingAndGlyphs" >A72</text>
<text x="604.4" y="307.8" font-size="11" fill="#4aa84a" textLength="18.5" lengthAdjust="spacingAndGlyphs" >A73</text>
<text x="671" y="305.8" font-size="11" fill="#4aa84a" textLength="19" lengthAdjust="spacingAndGlyphs" >A74'</text>
<text x="695" y="257" font-size="11" fill="#4aa84a" textLength="33" lengthAdjust="spacingAndGlyphs" >A63a2</text>
<text x="746" y="296.3" font-size="11" fill="#4aa84a" textLength="19.5" lengthAdjust="spacingAndGlyphs" >A74</text>
<text x="869" y="397.3" font-size="11" fill="#4aa84a" textLength="32" lengthAdjust="spacingAndGlyphs" >A67a2</text>
<text x="903" y="551.3" font-size="11" fill="#4aa84a" textLength="44" lengthAdjust="spacingAndGlyphs" >A66a1a2</text>
<text x="745.9" y="605.9" font-size="11" fill="#4aa84a" textLength="15.5" lengthAdjust="spacingAndGlyphs" >A71</text>
<text x="669.8" y="633" font-size="11" fill="#4aa84a" textLength="44" lengthAdjust="spacingAndGlyphs" >A65a1a2</text>
<text x="678" y="650.6" font-size="11" fill="#4aa84a" textLength="45" lengthAdjust="spacingAndGlyphs" >A65a1a2'</text>
<text x="595.7" y="644.7" font-size="11" fill="#4aa84a" textLength="33.5" lengthAdjust="spacingAndGlyphs" >A64a2</text>
<text x="516" y="644.7" font-size="11" fill="#4aa84a" textLength="18" lengthAdjust="spacingAndGlyphs" >A70</text>
<text x="434.9" y="644.7" font-size="11" fill="#4aa84a" textLength="33" lengthAdjust="spacingAndGlyphs" >A59a2</text>
<text x="551" y="429.2" font-size="11" fill="#4aa84a" textLength="33" lengthAdjust="spacingAndGlyphs" >A22a2</text>
<text x="524" y="466.6" font-size="11" fill="#4aa84a" textLength="34" lengthAdjust="spacingAndGlyphs" >A22a2'</text>
<text x="536.8" y="350.7" font-size="11" fill="#4aa84a" textLength="20" lengthAdjust="spacingAndGlyphs" >A73'</text>
<text x="452" y="379.3" font-size="11" fill="#4aa84a" textLength="20" lengthAdjust="spacingAndGlyphs" >A72'</text>
<text x="375.5" y="405.1" font-size="11" fill="#4aa84a" textLength="32" lengthAdjust="spacingAndGlyphs" >A61a2'</text>
<text x="609.9" y="680.7" font-size="11" fill="#4aa84a" textLength="35" lengthAdjust="spacingAndGlyphs" >A64a2'</text>
<text x="454" y="718.4" font-size="11" fill="#4aa84a" textLength="34" lengthAdjust="spacingAndGlyphs" >A59a2'</text>
<path d="M714.9 260.8 C 718 259, 721 258.3, 727 258.3 L 743.2 258.3 C 748 258.5, 753 260, 758.1 261.6 L 768 264.9 L 768 275.7 C 769 277, 769.7 278.5, 769.7 281 L 769.7 294.8 C 769.5 297, 769 299, 768 300.6 C 766.5 303, 765 305, 762 306.6 C 759 308.3, 756 308.9, 752 309.1 L 743.2 309.3 C 740 309.2, 737.5 308.8, 734.9 308.1 C 731 307.2, 728 306.2, 724.9 304.8 C 721 303, 718.5 301.3, 716.6 299 C 714 296, 712.3 293, 711.6 289.8 C 710.6 286, 710.4 283, 710.4 279 C 710.4 275, 710.8 272, 711.6 269.1 C 712.3 266, 713.3 263, 714.9 260.8 Z" fill="#ffff00" style="mix-blend-mode:multiply"/>
<rect x="2.2" y="757" width="1.6" height="1" fill="#c4c4cc"/>
<rect x="2.2" y="759" width="1.6" height="1" fill="#c4c4cc"/>
<rect x="2.2" y="762" width="1.6" height="1" fill="#c4c4cc"/>
<rect x="2.2" y="764" width="1.6" height="1" fill="#c4c4cc"/>
<rect x="2.2" y="766" width="1.6" height="1" fill="#c4c4cc"/>
<rect x="2.2" y="768" width="1.6" height="1" fill="#c4c4cc"/>
<rect x="2.2" y="771" width="1.6" height="1" fill="#c4c4cc"/>
<text x="7.5" y="768" font-size="10.8" fill="#000" stroke="#000" stroke-width="0.2" textLength="28.5" lengthAdjust="spacingAndGlyphs" >Altura:</text>
<rect x="36.5" y="756.5" width="33" height="15" fill="#e5e5e5" stroke="#adadad" stroke-width="1" />
<text x="39" y="768" font-size="10.8" fill="#000" stroke="#000" stroke-width="0.2" textLength="15.4" lengthAdjust="spacingAndGlyphs" >176</text>
<path d="M61 762.5 L63.5 765 L66 762.5" fill="none" stroke="#606060" stroke-width="0.9"/>
<text x="70.9" y="768" font-size="10.8" fill="#000" stroke="#000" stroke-width="0.2" textLength="36.7" lengthAdjust="spacingAndGlyphs" >Tamaño:</text>
<rect x="108.5" y="756.5" width="28.3" height="15" fill="#e5e5e5" stroke="#adadad" stroke-width="1" />
<text x="111" y="768" font-size="10.8" fill="#000" stroke="#000" stroke-width="0.2" textLength="10.7" lengthAdjust="spacingAndGlyphs" >48</text>
<path d="M128 762.5 L130.5 765 L133 762.5" fill="none" stroke="#606060" stroke-width="0.9"/>
<text x="140.8" y="768" font-size="10.8" fill="#000" stroke="#000" stroke-width="0.2" textLength="135.7" lengthAdjust="spacingAndGlyphs" >XPos: -14.22, YPos: 24.96 (cm)</text>
</svg></body></html>
